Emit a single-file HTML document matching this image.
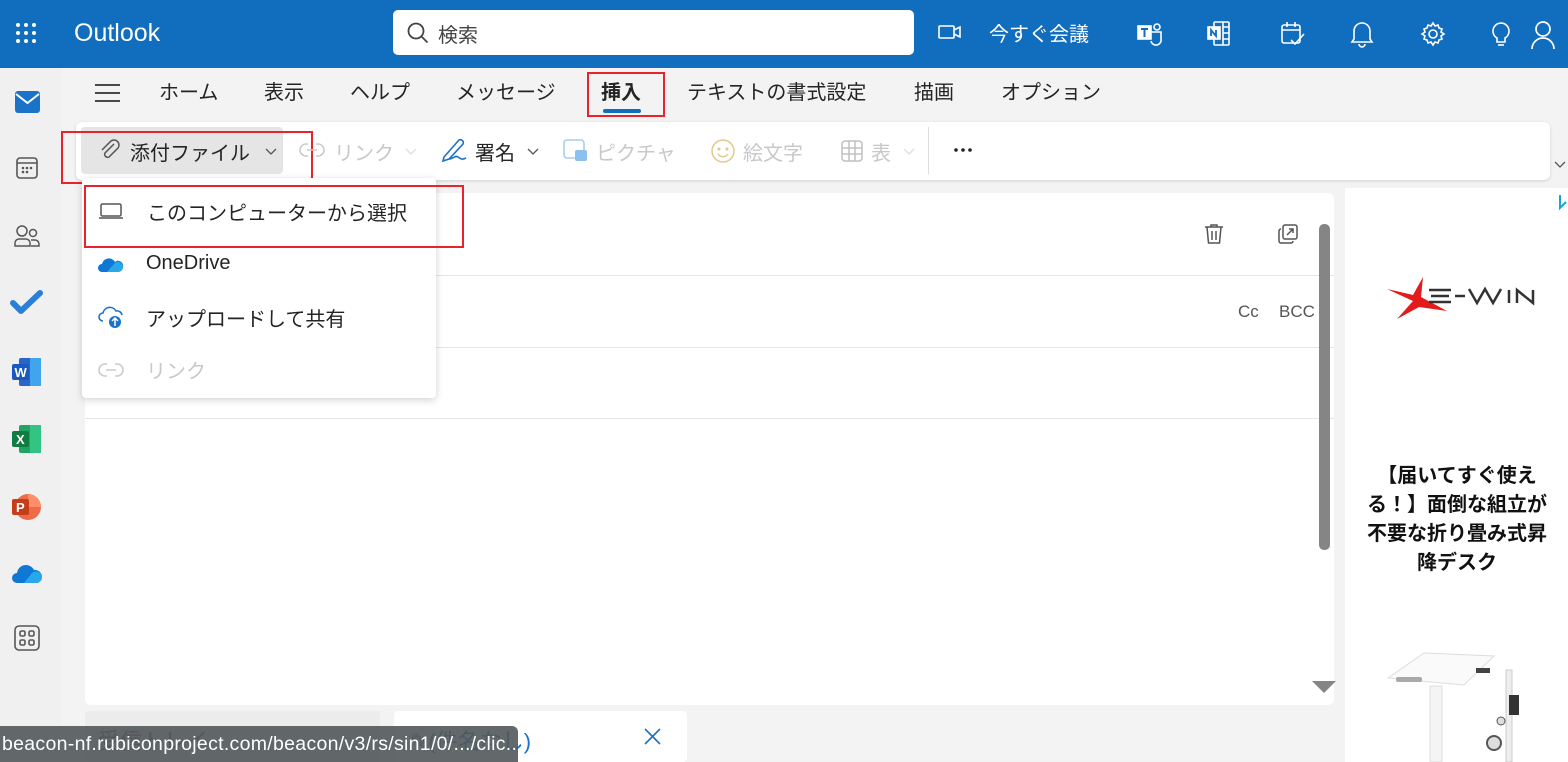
<!DOCTYPE html>
<html><head><meta charset="utf-8">
<style>
*{margin:0;padding:0;box-sizing:border-box}
body{width:1568px;height:762px;overflow:hidden;background:#f3f3f3;font-family:"Liberation Sans","Noto Sans CJK JP",sans-serif;color:#242424;position:relative}
.a{position:absolute}
.top{left:0;top:0;width:1568px;height:68px;background:#116dbd}
.t{position:absolute;white-space:nowrap}
svg{position:absolute;overflow:visible}
</style></head><body>
<div class="a top"></div>
<svg style="left:15px;top:22px" width="24" height="24" viewBox="0 0 24 24" fill="#fff">
<circle cx="3" cy="3" r="2"/><circle cx="11" cy="3" r="2"/><circle cx="19" cy="3" r="2"/>
<circle cx="3" cy="11" r="2"/><circle cx="11" cy="11" r="2"/><circle cx="19" cy="11" r="2"/>
<circle cx="3" cy="19" r="2"/><circle cx="11" cy="19" r="2"/><circle cx="19" cy="19" r="2"/></svg>
<div class="t" style="left:74px;top:19px;font-size:25px;color:#fff">Outlook</div>
<div class="a" style="left:393px;top:10px;width:521px;height:45px;background:#fff;border-radius:5px"></div>
<svg style="left:407px;top:22px" width="22" height="22" fill="none" stroke="#444" stroke-width="1.8"><circle cx="9" cy="9" r="7.5"/><path d="M14.5 14.5l6 6"/></svg>
<div class="t" style="left:438px;top:19px;font-size:20px;color:#444">検索</div>
<svg style="left:938px;top:24px" width="24" height="18" fill="none" stroke="#fff" stroke-width="1.6"><rect x="1" y="2" width="15" height="12" rx="1"/><path d="M16 6l6-3v10l-6-3"/></svg>
<div class="t" style="left:989px;top:18px;font-size:20px;color:#fff">今すぐ会議</div>
<svg style="left:1137px;top:22px" width="26" height="26" fill="none" stroke="#fff" stroke-width="1.6"><rect x="1" y="4" width="13" height="13" fill="#fff"/><path d="M4 7h7M7.5 7v8" stroke="#116dbd" stroke-width="2"/><circle cx="20" cy="5" r="3"/><path d="M14 10h10v7a5 5 0 0 1-10 2"/></svg>
<svg style="left:1207px;top:21px" width="24" height="26" fill="none" stroke="#fff" stroke-width="1.6"><rect x="7" y="1" width="15" height="23" rx="1"/><path d="M16 6h6M16 12h6M16 18h6M16 1v23"/><rect x="1" y="6" width="12" height="12" fill="#fff"/><path d="M4 15V9l5 6V9" stroke="#116dbd" stroke-width="1.8"/></svg>
<svg style="left:1280px;top:21px" width="26" height="26" fill="none" stroke="#fff" stroke-width="1.6"><rect x="2" y="4" width="18" height="18" rx="2"/><path d="M2 9h18M7 1v5M15 1v5M11 19l4 4 9-10"/></svg>
<svg style="left:1350px;top:20px" width="24" height="28" fill="none" stroke="#fff" stroke-width="1.6"><path d="M4 19V11a8 8 0 0 1 16 0v8l2 3H2z"/><path d="M9 24a3 3 0 0 0 6 0"/></svg>
<svg style="left:1420px;top:21px" width="26" height="26" fill="none" stroke="#fff" stroke-width="1.6"><circle cx="13" cy="13" r="4"/><path d="M13 2l2 3 3-1 1 3 3 1-1 3 3 2-3 2 1 3-3 1-1 3-3-1-2 3-2-3-3 1-1-3-3-1 1-3-3-2 3-2-1-3 3-1 1-3 3 1z"/></svg>
<svg style="left:1492px;top:20px" width="18" height="28" fill="none" stroke="#fff" stroke-width="1.6"><path d="M5 18a8 8 0 1 1 8 0v4H5z"/><path d="M6 25h6"/></svg>
<svg style="left:1530px;top:20px" width="26" height="30" fill="none" stroke="#fff" stroke-width="1.7"><circle cx="13" cy="9" r="7"/><path d="M2 29a11 11 0 0 1 22 0"/></svg>

<div class="a" style="left:0;top:68px;width:62px;height:694px;background:#f0f0f0"></div>
<svg style="left:15px;top:91px" width="25" height="22"><rect x="0" y="0" width="25" height="22" rx="3" fill="#1a73c8"/><path d="M1 3l11.5 9L24 3" fill="none" stroke="#fff" stroke-width="2"/></svg>
<svg style="left:16px;top:157px" width="22" height="22" fill="none" stroke="#555" stroke-width="1.6"><rect x="1" y="1" width="20" height="20" rx="3"/><path d="M1 6h20"/><g fill="#555" stroke="none"><circle cx="7" cy="11" r="1.3"/><circle cx="11" cy="11" r="1.3"/><circle cx="15" cy="11" r="1.3"/><circle cx="7" cy="15" r="1.3"/><circle cx="11" cy="15" r="1.3"/></g></svg>
<svg style="left:14px;top:224px" width="26" height="24" fill="none" stroke="#555" stroke-width="1.5"><circle cx="8" cy="7" r="5"/><circle cx="19" cy="9" r="3.5"/><path d="M1 22v-3a4 4 0 0 1 4-4h7a4 4 0 0 1 4 4v3zM17 16h4a4 4 0 0 1 4 4v2h-8"/></svg>
<svg style="left:12px;top:291px" width="30" height="24"><path d="M1 12l8 8L28 2" fill="none" stroke="#2a7fd6" stroke-width="6" stroke-linecap="round" stroke-linejoin="round"/></svg>
<svg style="left:12px;top:358px" width="30" height="28"><rect x="7" y="0" width="22" height="28" rx="2" fill="#2b64c8"/><rect x="18" y="0" width="11" height="28" fill="#41a5ee"/><rect x="0" y="6" width="17" height="16" rx="2" fill="#185abd"/><text x="2.5" y="19" font-size="13" font-weight="bold" fill="#fff" font-family="Liberation Sans">W</text></svg>
<svg style="left:12px;top:425px" width="30" height="28"><rect x="7" y="0" width="22" height="28" rx="2" fill="#21a366"/><rect x="18" y="0" width="11" height="28" fill="#33c481"/><rect x="0" y="6" width="17" height="16" rx="2" fill="#107c41"/><text x="4" y="19" font-size="13" font-weight="bold" fill="#fff" font-family="Liberation Sans">X</text></svg>
<svg style="left:12px;top:492px" width="30" height="30"><circle cx="16" cy="15" r="13" fill="#ed6c47"/><path d="M16 2a13 13 0 0 1 13 13H16z" fill="#ff8f6b"/><rect x="0" y="7" width="17" height="16" rx="2" fill="#c43e1c"/><text x="4" y="20" font-size="13" font-weight="bold" fill="#fff" font-family="Liberation Sans">P</text></svg>
<svg style="left:12px;top:563px" width="30" height="20"><path d="M5 20a5 5 0 0 1 0-10 9 9 0 0 1 17-3 7 7 0 0 1 8 7 6 6 0 0 1-6 6z" fill="#0f78d4"/><path d="M12 20h12a6 6 0 0 0 6-6 6 6 0 0 0-10-4l-8 10z" fill="#28a8ea"/></svg>
<svg style="left:14px;top:625px" width="26" height="26" fill="none" stroke="#555" stroke-width="1.6"><rect x="1" y="1" width="24" height="24" rx="4"/><rect x="6" y="6" width="5" height="5" rx="1.5"/><rect x="15" y="6" width="5" height="5" rx="1.5"/><rect x="6" y="15" width="5" height="5" rx="1.5"/><rect x="15" y="15" width="5" height="5" rx="1.5"/></svg>

<svg style="left:95px;top:83px" width="26" height="20" stroke="#333" stroke-width="1.8"><path d="M0 2h25M0 10h25M0 18h25"/></svg>
<div class="t" style="left:159px;top:76px;font-size:20px">ホーム</div>
<div class="t" style="left:264px;top:76px;font-size:20px">表示</div>
<div class="t" style="left:350px;top:76px;font-size:20px">ヘルプ</div>
<div class="t" style="left:456px;top:76px;font-size:20px">メッセージ</div>
<div class="t" style="left:601px;top:76px;font-size:20px;font-weight:bold">挿入</div>
<div class="a" style="left:603px;top:109px;width:38px;height:4px;border-radius:2px;background:#116dbd"></div>
<div class="a" style="left:587px;top:72px;width:78px;height:45px;border:2px solid #e8242a"></div>
<div class="t" style="left:687px;top:76px;font-size:20px">テキストの書式設定</div>
<div class="t" style="left:914px;top:76px;font-size:20px">描画</div>
<div class="t" style="left:1001px;top:76px;font-size:20px">オプション</div>

<div class="a" style="left:76px;top:122px;width:1474px;height:58px;background:#fff;border-radius:6px;box-shadow:0 1px 3px rgba(0,0,0,.15)"></div>
<div class="a" style="left:81px;top:127px;width:202px;height:47px;background:#e5e5e5;border-radius:4px"></div>
<svg style="left:100px;top:140px" width="20" height="22" fill="none" stroke="#555" stroke-width="1.5"><path d="M14 4l-9 9a3 3 0 0 0 4 4l9-9a5 5 0 0 0-7-7L2 10"/></svg>
<div class="t" style="left:130px;top:137px;font-size:20px">添付ファイル</div>
<svg style="left:265px;top:148px" width="12" height="8" fill="none" stroke="#555" stroke-width="1.3"><path d="M1 1l5 5 5-5"/></svg>
<div class="a" style="left:61px;top:131px;width:252px;height:53px;border:2px solid #e8242a"></div>
<svg style="left:300px;top:142px" width="24" height="16" fill="none" stroke="#ccc" stroke-width="1.6"><path d="M8 2H6a6 6 0 0 0 0 12h2M16 2h2a6 6 0 0 1 0 12h-2M7 8h10"/></svg>
<div class="t" style="left:334px;top:137px;font-size:20px;color:#c8c8c8">リンク</div>
<svg style="left:405px;top:148px" width="12" height="8" fill="none" stroke="#ddd" stroke-width="1.3"><path d="M1 1l5 5 5-5"/></svg>
<svg style="left:441px;top:137px" width="28" height="26" fill="none" stroke="#1a73c8" stroke-width="1.6"><path d="M3 20L18 3a3 3 0 0 1 4 4L8 22 2 24zM8 22c4 0 6-4 9-2s4 3 8 1"/></svg>
<div class="t" style="left:475px;top:137px;font-size:20px">署名</div>
<svg style="left:527px;top:148px" width="12" height="8" fill="none" stroke="#555" stroke-width="1.3"><path d="M1 1l5 5 5-5"/></svg>
<svg style="left:563px;top:139px" width="26" height="24"><rect x="1" y="1" width="20" height="18" rx="3" fill="none" stroke="#a9cdee" stroke-width="1.6"/><rect x="12" y="11" width="12" height="11" rx="2" fill="#8cc0ee"/></svg>
<div class="t" style="left:596px;top:137px;font-size:20px;color:#c8c8c8">ピクチャ</div>
<svg style="left:711px;top:139px" width="24" height="24" fill="none" stroke="#e2c88a" stroke-width="1.5"><circle cx="12" cy="12" r="11"/><circle cx="8" cy="10" r=".8" fill="#e2c88a"/><circle cx="16" cy="10" r=".8" fill="#e2c88a"/><path d="M7 15a6 6 0 0 0 10 0"/></svg>
<div class="t" style="left:743px;top:137px;font-size:20px;color:#c8c8c8">絵文字</div>
<svg style="left:841px;top:140px" width="22" height="22" fill="none" stroke="#c0c0c0" stroke-width="1.5"><rect x="1" y="1" width="20" height="20" rx="3"/><path d="M1 8h20M1 14h20M8 1v20M14 1v20"/></svg>
<div class="t" style="left:871px;top:137px;font-size:20px;color:#c8c8c8">表</div>
<svg style="left:903px;top:148px" width="12" height="8" fill="none" stroke="#ddd" stroke-width="1.3"><path d="M1 1l5 5 5-5"/></svg>
<div class="a" style="left:928px;top:127px;width:1px;height:47px;background:#ddd"></div>
<svg style="left:954px;top:148px" width="20" height="5" fill="#222"><circle cx="2" cy="2" r="1.8"/><circle cx="9" cy="2" r="1.8"/><circle cx="16" cy="2" r="1.8"/></svg>
<svg style="left:1554px;top:161px" width="12" height="8" fill="none" stroke="#555" stroke-width="1.3"><path d="M1 1l5 5 5-5"/></svg>

<div class="a" style="left:85px;top:193px;width:1249px;height:512px;background:#fff;border-radius:6px"></div>
<div class="a" style="left:85px;top:275px;width:1249px;height:1px;background:#e6e6e6"></div>
<div class="a" style="left:85px;top:347px;width:1249px;height:1px;background:#e6e6e6"></div>
<div class="a" style="left:85px;top:418px;width:1249px;height:1px;background:#e6e6e6"></div>
<svg style="left:1204px;top:223px" width="20" height="22" fill="none" stroke="#555" stroke-width="1.5"><path d="M1 4h18M7 4V2h6v2M3 4l1.5 16h11L17 4M8 8v9M12 8v9"/></svg>
<svg style="left:1278px;top:224px" width="20" height="20" fill="none" stroke="#555" stroke-width="1.5"><rect x="5" y="1" width="14" height="14" rx="2"/><path d="M3 5a2 2 0 0 0-2 2v10a2 2 0 0 0 2 2h10a2 2 0 0 0 2-2M9 11l6-6M11 5h4v4"/></svg>
<div class="t" style="left:1238px;top:302px;font-size:17px;color:#555">Cc</div>
<div class="t" style="left:1279px;top:302px;font-size:17px;color:#555">BCC</div>
<div class="a" style="left:1319px;top:224px;width:11px;height:326px;background:#858585;border-radius:5px"></div>
<svg style="left:1312px;top:681px" width="24" height="12"><path d="M0 0h24L12 12z" fill="#858585"/></svg>

<div class="a" style="left:82px;top:178px;width:354px;height:220px;background:#fff;border-radius:4px;box-shadow:0 2px 8px rgba(0,0,0,.18)"></div>
<svg style="left:99px;top:203px" width="24" height="16" fill="none" stroke="#555" stroke-width="1.5"><rect x="2" y="1" width="20" height="12" rx="1.5"/><path d="M0 15h24"/></svg>
<div class="t" style="left:147px;top:197px;font-size:20px">このコンピューターから選択</div>
<div class="a" style="left:84px;top:185px;width:380px;height:63px;border:2px solid #e8242a"></div>
<svg style="left:98px;top:257px" width="25" height="15"><path d="M4 15a4 4 0 0 1 0-8 7 7 0 0 1 13-2 5 5 0 0 1 8 5 5 5 0 0 1-5 5z" fill="#0f78d4"/><path d="M9 15h11a5 5 0 0 0 5-5 5 5 0 0 0-9-3z" fill="#28a8ea"/></svg>
<div class="t" style="left:146px;top:252px;font-size:20px">OneDrive</div>
<svg style="left:98px;top:304px" width="26" height="26"><path d="M5 17a4 4 0 0 1 0-8 7 7 0 0 1 13-2 5 5 0 0 1 6 4" fill="none" stroke="#1a73c8" stroke-width="1.6"/><circle cx="17" cy="18" r="6" fill="#1a73c8"/><path d="M17 22v-7M14 17l3-3 3 3" stroke="#fff" stroke-width="1.5" fill="none"/></svg>
<div class="t" style="left:146px;top:303px;font-size:20px">アップロードして共有</div>
<svg style="left:99px;top:362px" width="24" height="16" fill="none" stroke="#ccc" stroke-width="1.6"><path d="M8 2H6a6 6 0 0 0 0 12h2M16 2h2a6 6 0 0 1 0 12h-2M7 8h10"/></svg>
<div class="t" style="left:146px;top:355px;font-size:20px;color:#c8c8c8">リンク</div>

<div class="a" style="left:1345px;top:188px;width:223px;height:574px;background:#fff"></div>
<svg style="left:1558px;top:193px" width="10" height="18"><path d="M2 2v13l6-6" fill="none" stroke="#1aa3d8" stroke-width="2"/></svg>
<svg style="left:1385px;top:276px" width="160" height="48"><path d="M2 13l26 6 10-18-2 20 26 14-28-4-22 12 16-18z" fill="#e31b1b"/><g fill="none" stroke="#333" stroke-width="2.5"><path d="M44 14h22M46 20h18M44 26h22M70 20h10M84 13l8 14 8-14 8 14 8-14M124 14v13M132 27V14l16 13V14"/></g></svg>
<div class="t" style="left:1364px;top:462px;width:186px;text-align:center;white-space:normal;font-size:20px;font-weight:bold;line-height:29px;color:#111">【届いてすぐ使える！】面倒な組立が不要な折り畳み式昇降デスク</div>
<svg style="left:1380px;top:640px" width="188" height="122"><path d="M8 38l36-25 70 3-30 29z" fill="#fafafa" stroke="#ddd"/><rect x="16" y="37" width="26" height="5" fill="#aaa" rx="2"/><rect x="96" y="28" width="14" height="5" fill="#444"/><rect x="50" y="46" width="12" height="76" fill="#f4f4f4" stroke="#ddd"/><rect x="126" y="30" width="6" height="92" fill="#eee" stroke="#ccc"/><rect x="129" y="55" width="10" height="20" fill="#333"/><circle cx="114" cy="103" r="7" fill="#ddd" stroke="#555" stroke-width="2"/><circle cx="121" cy="81" r="4" fill="#ddd" stroke="#555"/></svg>

<div class="a" style="left:85px;top:711px;width:295px;height:51px;background:#ececec;border-radius:4px"></div>
<div class="t" style="left:98px;top:724px;font-size:22px;color:#555">受信トレイ</div>
<div class="a" style="left:394px;top:711px;width:293px;height:51px;background:#fff;border-radius:4px"></div>
<div class="t" style="left:410px;top:724px;font-size:22px;color:#1a73c8">✎(件名なし)</div>
<svg style="left:644px;top:728px" width="17" height="17" stroke="#1a73c8" stroke-width="1.6"><path d="M1 1l15 15M16 1L1 16"/></svg>
<div class="a" style="left:0;top:726px;width:518px;height:36px;background:rgba(82,88,91,.9);border-radius:0 6px 0 0"></div>
<div class="t" style="left:2px;top:733px;font-size:19.5px;color:#fff;letter-spacing:0.3px">beacon-nf.rubiconproject.com/beacon/v3/rs/sin1/0/.../clic...</div>
</body></html>
